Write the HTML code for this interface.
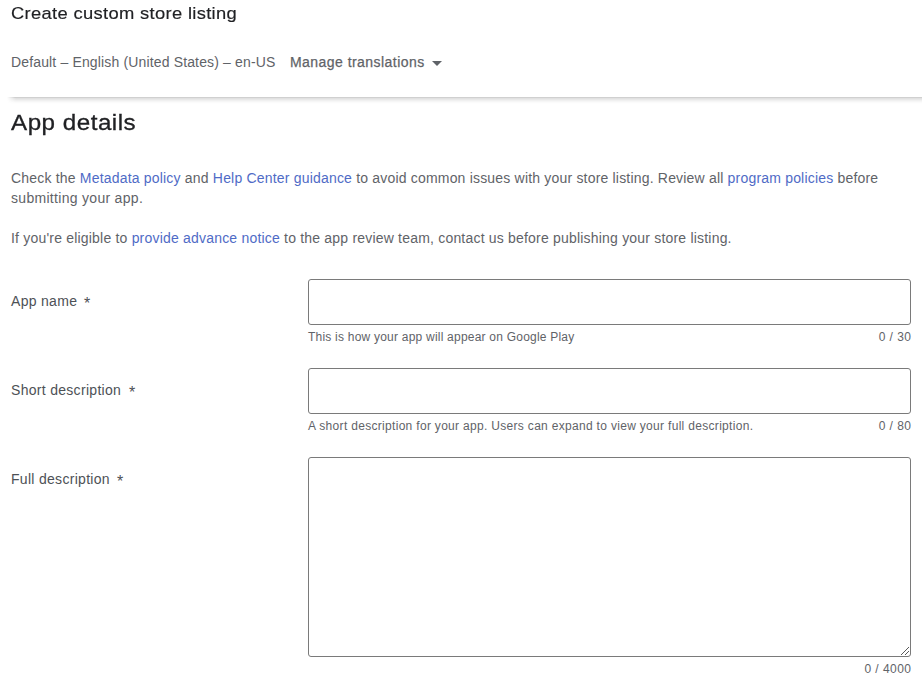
<!DOCTYPE html>
<html>
<head>
<meta charset="utf-8">
<style>
html, body { margin: 0; padding: 0; background: #fff; }
body { width: 922px; height: 689px; overflow: hidden; position: relative; font-family: "Liberation Sans", sans-serif; }
.abs { position: absolute; white-space: nowrap; }
#title { left: 11px; top: 4px; font-size: 17px; color: #202124; line-height: 20px; letter-spacing: 0.3px; -webkit-text-stroke: 0.15px #202124; transform: scaleX(1.08); transform-origin: 0 0; }
#lang { left: 11px; top: 54px; font-size: 14px; color: #5f6368; line-height: 16px; letter-spacing: 0.15px; }
#manage { left: 290px; top: 54px; font-size: 14px; color: #5f6368; line-height: 16px; letter-spacing: 0.45px; -webkit-text-stroke: 0.25px #5f6368; }
#tri { position: absolute; left: 432px; top: 61px; width: 0; height: 0; border-left: 5px solid transparent; border-right: 5px solid transparent; border-top: 5px solid #5f6368; }
#line { position: absolute; left: 7px; top: 97px; width: 915px; height: 1px; background: #d0d0d0; -webkit-mask-image: linear-gradient(to right, transparent 0px, #000 8px); }
#shade { position: absolute; left: 7px; top: 98px; width: 915px; height: 6px; -webkit-mask-image: linear-gradient(to right, transparent 0px, #000 9px); background: linear-gradient(to bottom, rgba(0,0,0,0.13) 0px, rgba(0,0,0,0.09) 1.5px, rgba(0,0,0,0.06) 2.5px, rgba(0,0,0,0.035) 3.5px, rgba(0,0,0,0.015) 4.5px, rgba(0,0,0,0) 6px); }
#h2 { left: 11px; top: 111px; font-size: 22px; color: #202124; line-height: 24px; letter-spacing: 0.45px; transform: scaleX(1.1); transform-origin: 0 0; -webkit-text-stroke: 0.3px #202124; }
.p { font-size: 14px; color: #5f6368; line-height: 20px; }
.p a { color: #4f6bc6; text-decoration: none; }
#p1 { left: 11px; top: 168px; letter-spacing: 0.19px; }
#p2 { left: 11px; top: 188px; letter-spacing: 0.3px; }
#p3 { left: 11px; top: 228px; letter-spacing: 0.197px; }
.lbl { font-size: 14px; color: #4d5156; line-height: 16px; letter-spacing: 0.3px; }
.ast { font-size: 16px; line-height: 16px; color: #4d5156; }
#a1 { left: 84px; top: 296px; }
#a2 { left: 129px; top: 385px; }
#a3 { left: 117px; top: 474px; }
#l1 { left: 11px; top: 293px; }
#l2 { left: 11px; top: 382px; }
#l3 { left: 11px; top: 471px; }
.box { position: absolute; left: 308px; width: 601px; border: 1px solid #7a7a7a; border-radius: 3px; }
#b1 { top: 279px; height: 44px; }
#b2 { top: 368px; height: 44px; }
#b3 { top: 457px; height: 198px; }
.help { font-size: 12px; color: #5f6368; line-height: 14px; }
#h1t { left: 308px; top: 330px; letter-spacing: 0.22px; }
#h2t { left: 308px; top: 419px; letter-spacing: 0.31px; }
.cnt { font-size: 12px; color: #5f6368; line-height: 14px; right: 10.6px; letter-spacing: 0.45px; }
#c1 { top: 330px; }
#c2 { top: 419px; }
#c3 { top: 662px; }
#grip { position: absolute; left: 898px; top: 644px; }
</style>
</head>
<body>
<div id="title" class="abs">Create custom store listing</div>
<div id="lang" class="abs">Default – English (United States) – en-US</div>
<div id="manage" class="abs">Manage translations</div>
<div id="tri"></div>
<div id="line"></div><div id="shade"></div>
<div id="h2" class="abs">App details</div>
<div id="p1" class="abs p">Check the <a>Metadata policy</a> and <a>Help Center guidance</a> to avoid common issues with your store listing. Review all <a>program policies</a> before</div>
<div id="p2" class="abs p">submitting your app.</div>
<div id="p3" class="abs p">If you're eligible to <a>provide advance notice</a> to the app review team, contact us before publishing your store listing.</div>
<div id="l1" class="abs lbl">App name</div><div id="a1" class="abs ast">*</div>
<div id="l2" class="abs lbl">Short description</div><div id="a2" class="abs ast">*</div>
<div id="l3" class="abs lbl">Full description</div><div id="a3" class="abs ast">*</div>
<div id="b1" class="box"></div>
<div id="b2" class="box"></div>
<div id="b3" class="box"></div>
<div id="h1t" class="abs help">This is how your app will appear on Google Play</div>
<div id="h2t" class="abs help">A short description for your app. Users can expand to view your full description.</div>
<div id="c1" class="abs cnt">0 / 30</div>
<div id="c2" class="abs cnt">0 / 80</div>
<div id="c3" class="abs cnt">0 / 4000</div>
<svg id="grip" width="12" height="12" viewBox="0 0 12 12" fill="#5a5a5a"><rect x="3" y="10" width="1" height="1"/><rect x="4" y="9" width="1" height="1"/><rect x="5" y="8" width="1" height="1"/><rect x="6" y="7" width="1" height="1"/><rect x="7" y="6" width="1" height="1"/><rect x="8" y="5" width="1" height="1"/><rect x="9" y="4" width="1" height="1"/><rect x="10" y="3" width="1" height="1"/><rect x="7" y="10" width="1" height="1"/><rect x="8" y="9" width="1" height="1"/><rect x="9" y="8" width="1" height="1"/><rect x="10" y="7" width="1" height="1"/></svg>
</body>
</html>
